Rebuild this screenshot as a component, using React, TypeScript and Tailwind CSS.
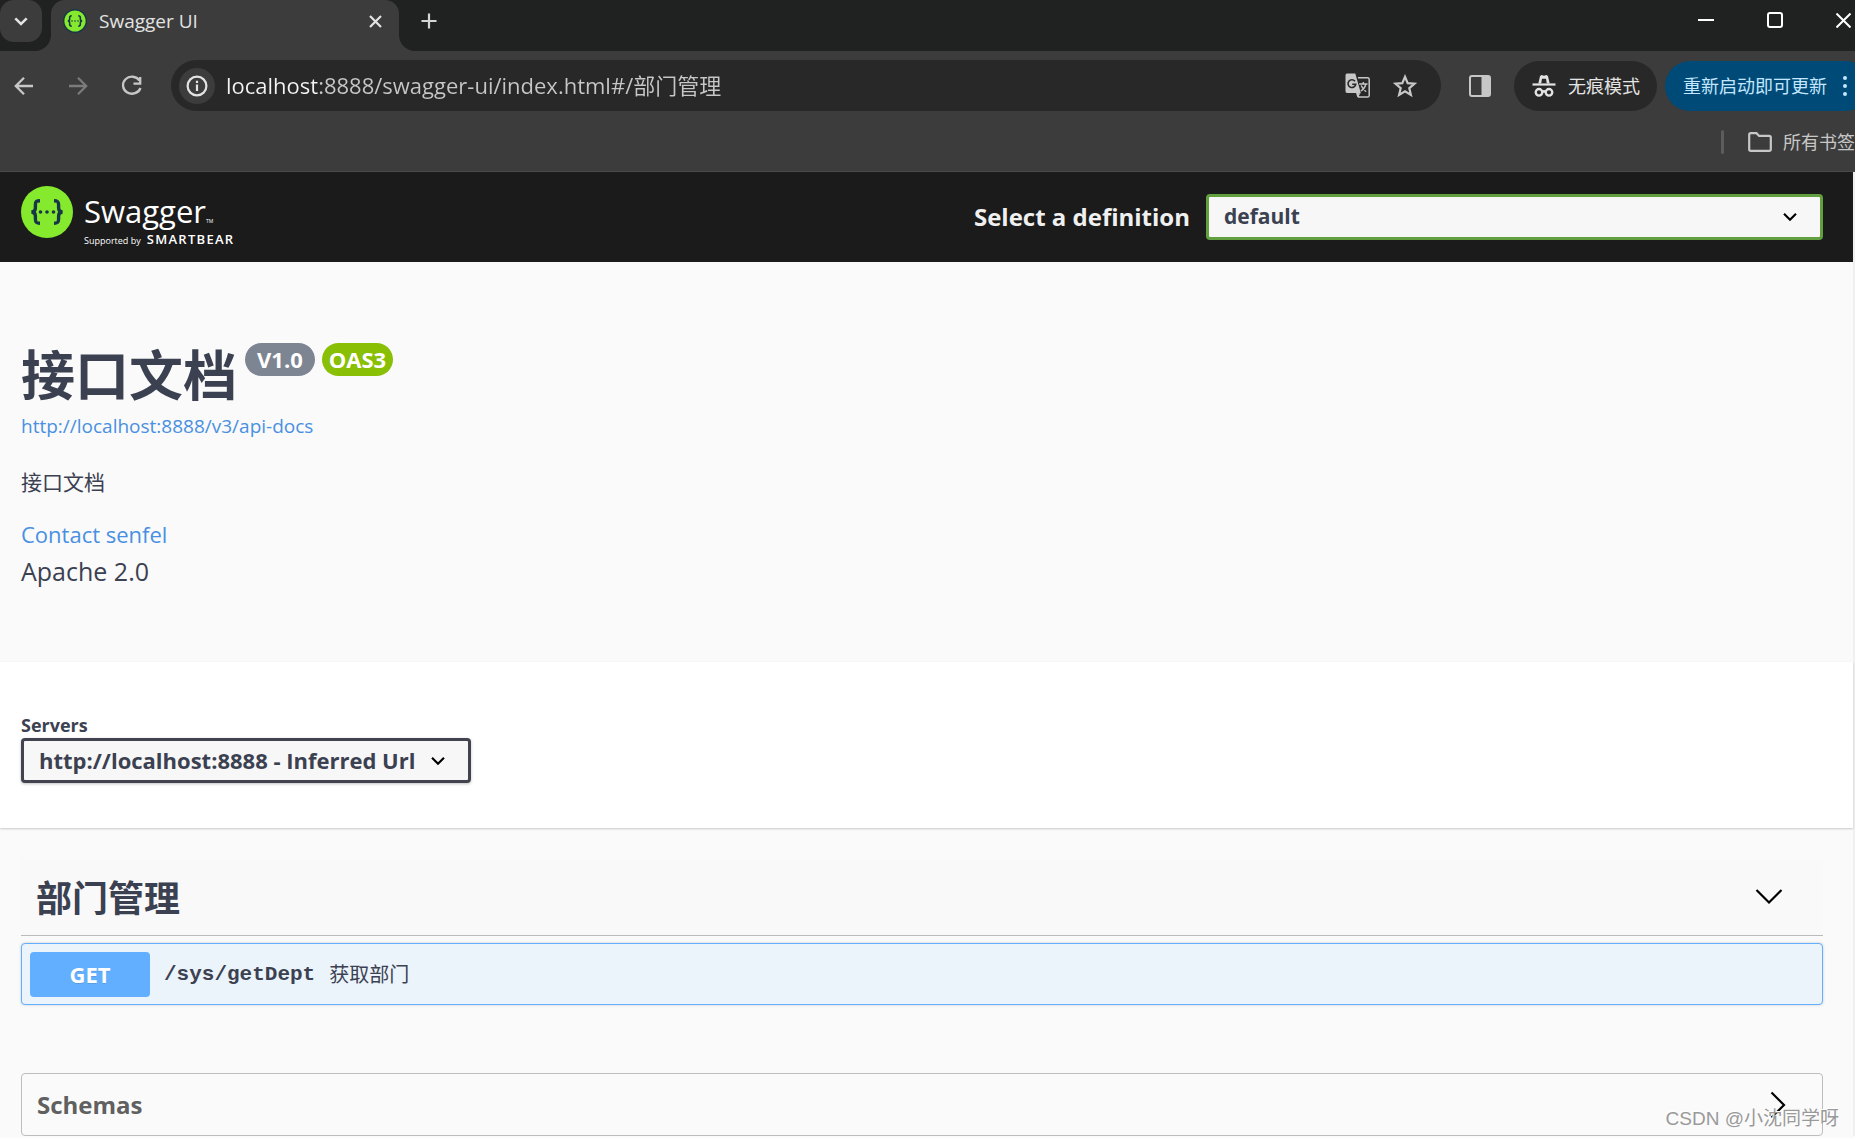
import React, { useState } from 'react';

const styles = {
  iconButton: `flex items-center justify-center shrink-0 text-[#c7c7c7]`,
  select: `w-full appearance-none rounded border-[3px] bg-[#f7f7f7] pl-[15px] pr-10
    font-bold text-[#3b4151] outline-none`,
  chevron: `absolute top-1/2 -translate-y-1/2 pointer-events-none`,
  link: `text-[#4990e2] hover:underline`,
};

function SwaggerMark({ size, outlined }: { size: number; outlined?: boolean }) {
  return (
    <svg width={size} height={size} viewBox="0 0 52 52" className="shrink-0" aria-hidden="true">
      <circle cx="26" cy="26" r="26" fill={outlined ? '#173647' : '#85ea2d'} />
      {outlined && <circle cx="26" cy="26" r="23" fill="#85ea2d" />}
      <g fill="none" stroke="#173647" strokeWidth="3.4">
        <path d="M19 14.7c-3.6 0-4.6 1-4.6 4.2v3c0 2.7-1 4-4 4.1 3 .1 4 1.4 4 4.1v3c0 3.2 1 4.2 4.6 4.2" />
        <path d="M33 14.7c3.6 0 4.6 1 4.6 4.2v3c0 2.7 1 4 4 4.1-3 .1-4 1.4-4 4.1v3c0 3.2-1 4.2-4.6 4.2" />
      </g>
      <g fill="#173647">
        <circle cx="19.5" cy="26" r="1.8" />
        <circle cx="26" cy="26" r="1.8" />
        <circle cx="32.5" cy="26" r="1.8" />
      </g>
    </svg>
  );
}

function SelectArrow() {
  return (
    <svg width="14" height="9" viewBox="0 0 14 9" fill="none" stroke="#000" strokeWidth="2.2">
      <path d="M1 1.2l6 6 6-6" />
    </svg>
  );
}

function TabStrip() {
  return (
    <div className="flex h-[51px] bg-[#3c3c3c]">
      <div className="w-[51px] shrink-0 rounded-br-2xl bg-[#202221]">
        <button aria-label="Search tabs" className="flex h-[42px] w-[42px] items-center justify-center rounded-[14px] bg-[#3c3c3c]">
          <svg width="14" height="9" viewBox="0 0 14 9" fill="none" stroke="#e3e3e3" strokeWidth="2.5">
            <path d="M1.3 1.3L7 7l5.7-5.7" />
          </svg>
        </button>
      </div>
      <div className="w-[348px] shrink-0 bg-[#202221]">
        <div className="flex h-full items-start rounded-t-[14px] bg-[#3c3c3c] px-3">
          <div className="flex h-[42px] flex-1 items-center gap-3">
            <SwaggerMark size={24} outlined />
            <span className="flex-1 text-[19px] text-[#e3e3e3]">Swagger UI</span>
            <button aria-label="Close tab" className="flex h-6 w-6 items-center justify-center">
              <svg width="13" height="13" viewBox="0 0 13 13" stroke="#e3e3e3" strokeWidth="2.2">
                <path d="M1 1l11 11M12 1L1 12" />
              </svg>
            </button>
          </div>
        </div>
      </div>
      <div className="flex min-w-0 flex-1 justify-between rounded-bl-2xl bg-[#202221] pl-[18px]">
        <button aria-label="New tab" className="flex h-[42px] w-6 items-center justify-center">
          <svg width="16" height="16" viewBox="0 0 16 16" stroke="#d5d5d5" strokeWidth="2.2">
            <path d="M8 .5v15M.5 8h15" />
          </svg>
        </button>
        <div className="flex h-10 items-center">
          <button aria-label="Minimize" className="flex h-full w-[69px] items-center justify-center">
            <svg width="16" height="2" viewBox="0 0 16 2"><rect width="16" height="2" fill="#fff" /></svg>
          </button>
          <button aria-label="Maximize" className="flex h-full w-[69px] items-center justify-center">
            <svg width="16" height="16" viewBox="0 0 16 16" fill="none" stroke="#fff" strokeWidth="2">
              <rect x="1" y="1" width="14" height="14" rx="2" />
            </svg>
          </button>
          <button aria-label="Close" className="flex h-full w-[46px] items-center justify-end pr-1">
            <svg width="15" height="15" viewBox="0 0 15 15" stroke="#fff" strokeWidth="2">
              <path d="M.5.5l14 14M14.5.5l-14 14" />
            </svg>
          </button>
        </div>
      </div>
    </div>
  );
}

function Toolbar() {
  const [url, setUrl] = useState('localhost:8888/swagger-ui/index.html#/部门管理');

  return (
    <div className="flex items-center overflow-hidden bg-[#3c3c3c] pt-[9px]">
      <div className="flex w-[171px] shrink-0 items-center gap-[30px] pl-3">
        <button aria-label="Back" className={styles.iconButton}>
          <svg width="24" height="24" viewBox="0 0 24 24" fill="none" stroke="currentColor" strokeWidth="2.3">
            <path d="M21 12H4.500M12 3.800L3.800 12l8.200 8.200" />
          </svg>
        </button>
        <button aria-label="Forward" disabled className="flex shrink-0 text-[#7b7b7b]">
          <svg width="24" height="24" viewBox="0 0 24 24" fill="none" stroke="currentColor" strokeWidth="2.3">
            <path d="M3 12h16.500M12 3.800l8.200 8.200-8.200 8.200" />
          </svg>
        </button>
        <button aria-label="Reload" className={styles.iconButton}>
          <svg width="24" height="24" viewBox="0 0 24 24" fill="none" stroke="currentColor" strokeWidth="2.3">
            <path d="M19.5 6.5A9 8.5 0 1 0 20.5 14M20.2 3v6.700h-6.700" />
          </svg>
        </button>
      </div>

      <div className="flex h-[51px] min-w-0 flex-1 items-center rounded-full bg-[#282828] pl-2 pr-6">
        <button aria-label="Site information" className="flex h-9 w-9 shrink-0 items-center justify-center rounded-full bg-[#3c3c3c]">
          <svg width="22" height="22" viewBox="0 0 22 22" fill="none" stroke="#e3e3e3" strokeWidth="2.2">
            <circle cx="11" cy="11" r="9.4" />
            <path d="M11 9.600v6.400M11 5.800v2.300" />
          </svg>
        </button>
        <input
          type="text"
          aria-label="Address"
          value={url}
          onChange={(e) => setUrl(e.target.value)}
          className="ml-[11px] min-w-0 flex-1 bg-linear-to-r from-[#f4f4f4] from-[92px] to-[#c7c7c7] to-[92px] bg-clip-text text-[22px] text-transparent outline-none"
        />
        <div className="flex items-center gap-[23px]">
          <button aria-label="Translate" className={styles.iconButton}>
            <svg width="25" height="25" viewBox="0 0 25 25" fill="none">
              <path d="M13 4.700h9.500a1.700 1.700 0 0 1 1.700 1.700v16a1.700 1.700 0 0 1-1.700 1.700h-8.800l-1.500-4" stroke="currentColor" strokeWidth="1.5" />
              <path d="M2 .5h8.300l5.500 19.500H2A1.700 1.700 0 0 1 .5 18.300V2.200A1.700 1.700 0 0 1 2 .5z" fill="currentColor" />
              <path d="M15.600 20.200l-3.200 4.300-1.300-4.500z" fill="currentColor" />
              <path d="M10 8.200a3.900 3.900 0 1 0 .8 3H7.200" stroke="#282828" strokeWidth="1.6" />
              <path d="M14.200 11h8.300M18.300 9v2M20.800 11c-.6 3-2.400 5.400-5 7M16.200 12.500c1 2.500 2.800 4.700 5 6.300" stroke="currentColor" strokeWidth="1.4" />
            </svg>
          </button>
          <button aria-label="Bookmark this tab" className={styles.iconButton}>
            <svg width="24" height="24" viewBox="0 0 24 24" fill="none" stroke="currentColor" strokeWidth="2.2">
              <path d="M12 2.800l2.700 6.300 6.800.6-5.200 4.500 1.600 6.700L12 17.300l-5.900 3.600 1.600-6.700-5.200-4.500 6.800-.6z" />
            </svg>
          </button>
        </div>
      </div>

      <button aria-label="Side panel" className="flex h-10 w-[73px] shrink-0 items-center justify-center pl-1 text-[#c7c7c7]">
        <svg width="22" height="22" viewBox="0 0 22 22" fill="none">
          <rect x="1" y="1" width="20" height="20" rx="2" stroke="currentColor" strokeWidth="2" />
          <path d="M12.500 1H20a1 1 0 0 1 1 1v18a1 1 0 0 1-1 1h-7.500z" fill="currentColor" />
        </svg>
      </button>
      <button className="flex h-[50px] shrink-0 items-center gap-3 whitespace-nowrap rounded-full bg-[#282828] pl-[18px] pr-[17px] text-lg text-[#e3e3e3]">
        <svg width="24" height="24" viewBox="0 0 24 24" fill="#e3e3e3">
          <path d="M6.300 9.500L8 2.200 9.300.900l2.700.9 2.700-.9L16 2.200l1.700 7.300h-2.900L14 4.800h-4l-.8 4.700z" />
          <rect x="0.5" y="9.4" width="23" height="2.2" />
          <g fill="none" stroke="#e3e3e3" strokeWidth="2.3">
            <circle cx="7" cy="18.300" r="3.300" />
            <circle cx="17" cy="18.300" r="3.300" />
            <path d="M10.200 18c1-.8 2.600-.8 3.600 0" />
          </g>
        </svg>
        无痕模式
      </button>
      <button className="-mr-4 ml-2 flex h-[50px] shrink-0 items-center gap-4 whitespace-nowrap rounded-full bg-[#004a77] pl-[18px] pr-6 text-lg text-[#c2e7ff]">
        重新启动即可更新
        <svg width="4" height="22" viewBox="0 0 4 22" fill="#c2e7ff">
          <circle cx="2" cy="3" r="2" />
          <circle cx="2" cy="11" r="2" />
          <circle cx="2" cy="19" r="2" />
        </svg>
      </button>
    </div>
  );
}

function BookmarksBar() {
  return (
    <div className="flex h-[61px] items-center justify-end border-b border-[#4a4a4a] bg-[#3c3c3c] pt-0.5">
      <div className="h-6 w-[3px] rounded bg-[#5c5c5c]" />
      <button className="ml-6 flex shrink-0 items-center gap-[11px] whitespace-nowrap text-lg text-[#c7c7c7]">
        <svg width="24" height="20" viewBox="0 0 24 20" fill="none" stroke="currentColor" strokeWidth="2.2">
          <path d="M1.200 2.800c0-1 .6-1.600 1.600-1.600h5.700l2.600 2.700h10c1 0 1.700.6 1.700 1.600v11.700c0 1-.6 1.600-1.600 1.600H2.800c-1 0-1.600-.6-1.600-1.600z" />
        </svg>
        所有书签
      </button>
    </div>
  );
}

function Topbar() {
  return (
    <header className="flex h-[90px] items-center justify-between bg-[#1b1b1b] pl-[21px] pr-[30px]">
      <a href="#" className="flex items-start gap-[11px] text-white">
        <SwaggerMark size={52} />
        <div>
          <div className="flex items-end pt-[5px]">
            <span className="text-[31px] leading-10">Swagger</span>
            <span className="text-[5px] leading-5">TM</span>
          </div>
          <div className="flex items-baseline gap-[6px]">
            <span className="text-[9px] leading-4">Supported by</span>
            <span className="text-[13px] font-semibold leading-4 tracking-widest">SMARTBEAR</span>
          </div>
        </div>
      </a>
      <div className="flex items-center gap-4">
        <label htmlFor="definition" className="text-2xl font-bold text-[#f0f0f0]">
          Select a definition
        </label>
        <div className="relative w-[617px]">
          <select id="definition" className={`${styles.select} h-[46px] border-[#62a03f] text-[21px]`}>
            <option>default</option>
          </select>
          <span className={`${styles.chevron} right-[26px]`}><SelectArrow /></span>
        </div>
      </div>
    </header>
  );
}

function ApiInfo() {
  return (
    <section className="pb-[73px] pl-[21px] pr-[30px] pt-[81px]">
      <div className="flex items-start">
        <h1 className="text-[54px] font-bold leading-[64px]">接口文档</h1>
        <span className="ml-2 h-[33px] rounded-full bg-[#7d8492] px-3 text-[22px] font-bold leading-[33px] text-white">V1.0</span>
        <span className="ml-[7px] h-[33px] rounded-full bg-[#89bf04] px-[7px] text-[22px] font-bold leading-[33px] text-white">OAS3</span>
      </div>
      <a href="#" className={`${styles.link} mt-[7px] block w-fit text-[19px] leading-6`}>http://localhost:8888/v3/api-docs</a>
      <p className="mt-[30px] text-[21px] leading-7">接口文档</p>
      <a href="#" className={`${styles.link} mt-[22px] block w-fit text-[22px] leading-8`}>Contact senfel</a>
      <p className="mt-[3px] text-[25px] leading-9">Apache 2.0</p>
    </section>
  );
}

function Servers() {
  return (
    <section className="bg-white pb-[45px] pl-[21px] pt-[51px] shadow-[0_1px_2px_0_rgba(0,0,0,0.2)]">
      <label htmlFor="servers" className="block text-lg font-bold leading-[25px]">Servers</label>
      <div className="relative w-[450px]">
        <select id="servers" className={`${styles.select} block h-[45px] border-[#41444e] text-[22px] shadow-[0_1px_3px_0_rgba(0,0,0,0.25)]`}>
          <option>http://localhost:8888 - Inferred Url</option>
        </select>
        <span className={`${styles.chevron} right-[26px]`}><SelectArrow /></span>
      </div>
    </section>
  );
}

function Operations() {
  return (
    <main className="pl-[21px] pr-[30px] pt-[30px]">
      <button className="flex h-[78px] w-full items-center justify-between border-b border-[#bbbbbb] bg-[#f9f9f9] pl-[15px] pr-10">
        <h2 className="pt-1 text-4xl font-bold">部门管理</h2>
        <svg width="28" height="16" viewBox="0 0 28 16" fill="none" stroke="#000" strokeWidth="2.2">
          <path d="M1.500 1L14 13.500 26.500 1" />
        </svg>
      </button>

      <button className="mt-[7px] flex w-full items-center rounded border border-[#61affe] bg-[#ebf3fb] px-2 pb-[7px] pt-2 text-left shadow-[0_0_3px_rgba(0,0,0,0.19)]">
        <span className="h-[45px] w-[120px] rounded bg-[#61affe] text-center text-[22px] font-bold leading-[45px] text-white [text-shadow:0_1px_0_rgba(0,0,0,0.1)]">
          GET
        </span>
        <span className="ml-[14px] font-['Liberation_Mono',monospace] text-[21px] font-bold">/sys/getDept</span>
        <span className="ml-[14px] text-xl">获取部门</span>
      </button>

      <button className="mt-[68px] flex h-[63px] w-full items-center justify-between rounded border border-[#bdbdbd] pl-[15px] pr-9">
        <h3 className="text-2xl font-bold text-[#606060]">Schemas</h3>
        <svg width="16" height="28" viewBox="0 0 16 28" fill="none" stroke="#000" strokeWidth="2.2">
          <path d="M1.500 1.500L14 14 1.500 26.500" />
        </svg>
      </button>
    </main>
  );
}

export default function App() {
  return (
    <div className="relative min-h-screen bg-[#fafafa] font-['Open_Sans','Noto_Sans_CJK_SC',sans-serif] text-[#3b4151]">
      {/* Browser chrome */}
      <TabStrip />
      <Toolbar />
      <BookmarksBar />

      {/* Page */}
      <div className="border-r-2 border-[#f0f0f0]">
        <Topbar />
        <ApiInfo />
        <Servers />
        <Operations />
      </div>

      {/* Watermark */}
      <div className="absolute bottom-[5px] right-4 font-['Liberation_Sans','Noto_Sans_CJK_SC',sans-serif] text-[19px] leading-7 text-[#999] [text-shadow:-1px_-1px_0_#fff]">
        CSDN @小沈同学呀
      </div>
    </div>
  );
}
